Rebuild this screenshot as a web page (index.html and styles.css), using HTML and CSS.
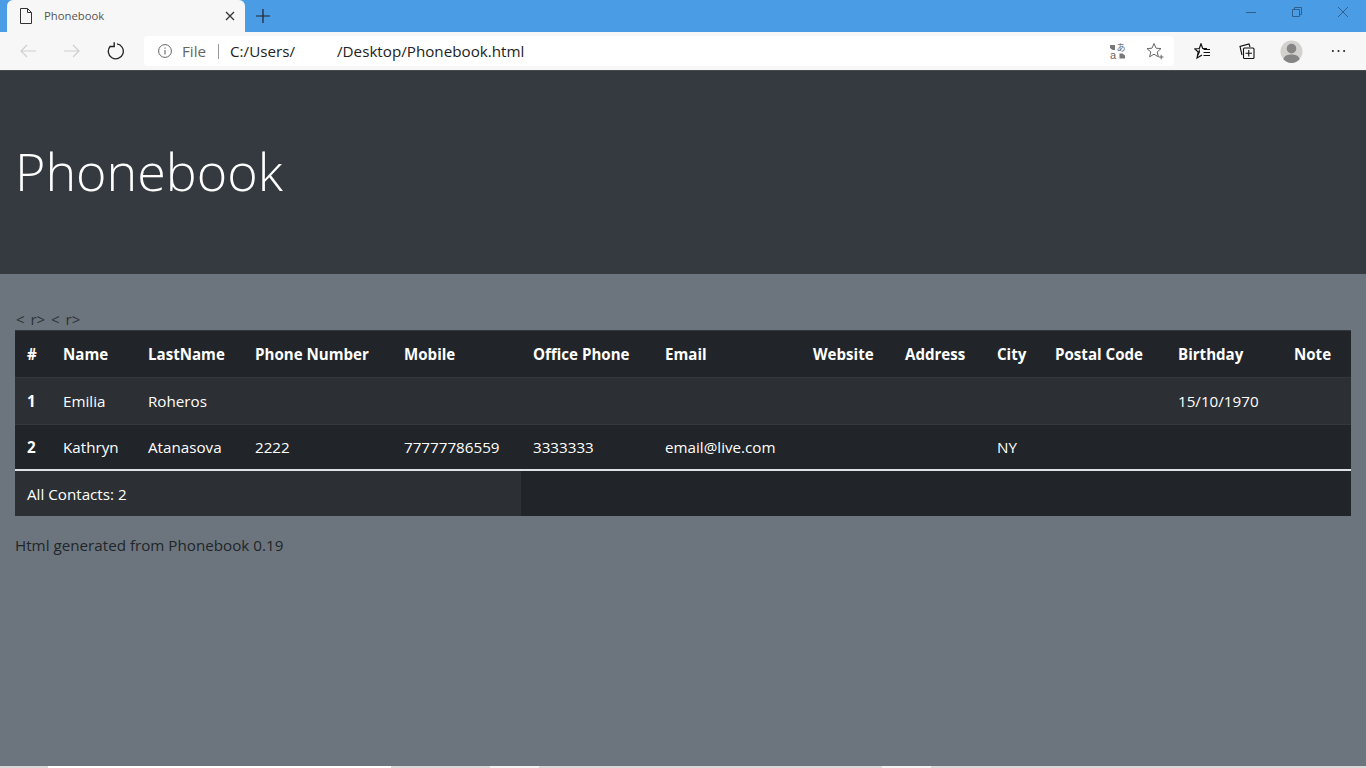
FILE: index.html
```html
<!DOCTYPE html>
<html lang="en">
<head>
<meta charset="utf-8">
<title>Phonebook</title>
<link rel="stylesheet" href="styles.css">
</head>
<body>
<div class="browser">
  <div class="tabstrip">
    <div class="tab">
      <svg class="tab-doc" width="14" height="16" viewBox="0 0 14 16"><path d="M1.500 .5h7l4 4v11h-11z M8.500 .5v4h4" fill="none" stroke="#333" stroke-width="1"/></svg>
      <span class="tab-title">Phonebook</span>
      <svg class="tab-close" width="10" height="10" viewBox="0 0 10 10"><path d="M1 1l8 8M9 1l-8 8" stroke="#333" stroke-width="1.300"/></svg>
    </div>
    <svg class="newtab" width="14" height="14" viewBox="0 0 14 14"><path d="M7 0v14M0 7h14" stroke="#222" stroke-width="1.200"/></svg>
    <div class="winctl">
      <svg width="10" height="10" viewBox="0 0 10 10"><path d="M0 5.500h10" stroke="#2f5f8a" stroke-width="1"/></svg>
      <svg width="10" height="10" viewBox="0 0 10 10"><path d="M.5 2.500h7v7h-7z M2.500 2.500v-2h7v7h-2" fill="none" stroke="#2f5f8a" stroke-width="1"/></svg>
      <svg width="10" height="10" viewBox="0 0 10 10"><path d="M0 0l10 10M10 0l-10 10" stroke="#2f5f8a" stroke-width="1"/></svg>
    </div>
  </div>
  <div class="toolbar">
    <svg class="nav nav-back" width="16" height="14" viewBox="0 0 16 14"><path d="M16 7H1M7 1L1 7l6 6" fill="none" stroke="#cfcfcf" stroke-width="1.200"/></svg>
    <svg class="nav nav-fwd" width="16" height="14" viewBox="0 0 16 14"><path d="M0 7h15M9 1l6 6-6 6" fill="none" stroke="#cfcfcf" stroke-width="1.200"/></svg>
    <svg class="nav nav-reload" width="18" height="18" viewBox="0 0 18 18"><path d="M10 1.900A7.500 7.500 0 1 1 3.300 4.200" fill="none" stroke="#222" stroke-width="1.300"/><path d="M7.200 .3V4.500H2.800" fill="none" stroke="#222" stroke-width="1.400"/></svg>
    <div class="address">
      <svg class="info" width="14" height="14" viewBox="0 0 14 14"><circle cx="7" cy="7" r="6.400" fill="none" stroke="#666" stroke-width="1"/><path d="M7 6v4.500M7 3.500v1.200" stroke="#666" stroke-width="1.100"/></svg>
      <span class="file">File</span>
      <span class="sep"></span>
      <span class="url url-a">C:/Users/</span>
      <span class="url url-b">/Desktop/Phonebook.html</span>
      <svg class="translate" width="17" height="17" viewBox="0 0 17 17"><path d="M1 2h5v5H3.500L1 5zM16 15.500h-5.500v-5h3l2.500 2z" fill="#777"/><text x="7.500" y="8" font-size="9" fill="#666" font-family="Noto Sans CJK JP, sans-serif">あ</text><text x="1" y="16" font-size="11" fill="#666" font-family="Liberation Sans, sans-serif">a</text></svg>
      <svg class="fav" width="18" height="18" viewBox="0 0 18 18"><path d="M8 1.500l2 4.700 5 .4-3.800 3.300 1.200 4.900L8 12.200l-4.400 2.600 1.200-4.900L1 6.600l5-.4z" fill="none" stroke="#666" stroke-width="1"/><path d="M13 15h4.500M15.200 12.800v4.500" stroke="#666" stroke-width="1"/></svg>
    </div>
    <svg class="tool t-favs" width="17" height="16" viewBox="0 0 17 16"><path d="M13 5.500H8.700L7 .8 5.300 5.500.8 6l3.400 3L3 15l5-3" fill="none" stroke="#111" stroke-width="1.200"/><path d="M5.500 5.500L4.200 9 3 15l3-6z" fill="#111"/><path d="M9.500 6.500h6.500M9.500 9.500h6.500M9.500 12.500h6.500" stroke="#111" stroke-width="1.100"/></svg>
    <svg class="tool t-coll" width="16" height="16" viewBox="0 0 16 16"><path d="M3 12L1 3.500 10 1l1 3" fill="none" stroke="#111" stroke-width="1.100"/><rect x="4.500" y="5" width="10.500" height="10.500" rx="1" fill="#f7f7f7" stroke="#111" stroke-width="1.100"/><path d="M9.750 7v6.500M6.500 10.250h6.500" stroke="#111" stroke-width="1.100"/></svg>
    <svg class="tool t-user" width="23" height="23" viewBox="0 0 24 24"><circle cx="12" cy="12" r="11.500" fill="#d3d1ce"/><circle cx="12" cy="9" r="5" fill="#858585"/><path d="M3.500 20c1-4 4.500-5 8.500-5s7.500 1 8.500 5a11 11 0 0 1-17 0z" fill="#858585"/></svg>
    <svg class="tool t-more" width="15" height="4" viewBox="0 0 16 4"><circle cx="2" cy="2" r="1.100" fill="#222"/><circle cx="8" cy="2" r="1.100" fill="#222"/><circle cx="14" cy="2" r="1.100" fill="#222"/></svg>
  </div>
</div>
<header class="jumbotron">
  <h1 class="display">Phonebook</h1>
</header>
<main class="content">
  <div class="stray">&lt; r&gt; &lt; r&gt;</div>
  <table class="contacts">
    <colgroup>
      <col class="c1"><col class="c2"><col class="c3"><col class="c4"><col class="c5"><col class="c6"><col class="c7"><col class="c8"><col class="c9"><col class="c10"><col class="c11"><col class="c12"><col class="c13">
    </colgroup>
    <thead>
      <tr class="r-head"><th>#</th><th>Name</th><th>LastName</th><th>Phone Number</th><th>Mobile</th><th>Office Phone</th><th>Email</th><th>Website</th><th>Address</th><th>City</th><th>Postal Code</th><th>Birthday</th><th>Note</th></tr>
    </thead>
    <tbody>
      <tr class="r-one"><th>1</th><td>Emilia</td><td>Roheros</td><td></td><td></td><td></td><td></td><td></td><td></td><td></td><td></td><td>15/10/1970</td><td></td></tr>
      <tr class="r-two"><th>2</th><td>Kathryn</td><td>Atanasova</td><td>2222</td><td>77777786559</td><td>3333333</td><td>email@live.com</td><td></td><td></td><td>NY</td><td></td><td></td><td></td></tr>
    </tbody>
    <tfoot>
      <tr class="r-foot"><td class="total" colspan="5">All Contacts: 2</td><td colspan="8"></td></tr>
    </tfoot>
  </table>
  <p class="generated">Html generated from Phonebook 0.19</p>
</main>
<div class="taskstrip">
  <span class="seg s1"></span><span class="seg s2"></span><span class="seg s3"></span><span class="seg s4"></span><span class="seg s5"></span><span class="seg s6"></span><span class="seg s7"></span>
</div>
</body>
</html>
```
FILE: styles.css
```css
* { box-sizing: border-box; }
html, body { margin: 0; height: 100%; }
body {
  height: 768px;
  overflow: hidden;
  display: flex;
  flex-direction: column;
  background: #6c757d;
  color: #212529;
  font-family: "Open Sans", "Noto Sans", sans-serif;
  font-size: 15.200px;
}
.browser { flex: none; height: 71px; background: #f7f7f7; border-bottom: 1px solid #4a4a4a; }
.tabstrip { height: 32px; background: #4a9de4; display: flex; align-items: flex-start; padding-left: 7px; }
.tab {
  width: 238px; height: 32px; background: #f7f7f7;
  border-radius: 6px 6px 0 0;
  display: flex; align-items: center; padding: 0 10px 0 12px;
}
.tab-doc { flex: none; }
.tab-title { margin: 0 0 2px 11px; font-size: 11.300px; color: #555; flex: 1; }
.newtab { margin: 9px 0 0 11px; }
.winctl { margin-left: auto; display: flex; gap: 36px; padding: 7px 18px 0 0; }
.toolbar { height: 38px; display: flex; align-items: center; }
.nav-back { margin-left: 20px; }
.nav-fwd { margin-left: 28px; }
.nav-reload { margin-left: 27px; }
.address {
  margin-left: 19px; width: 1030px; height: 30px; background: #fff; border-radius: 4px;
  display: flex; align-items: center; padding-left: 14px; font-size: 15.200px;
}
.file { margin-left: 10px; color: #666; }
.sep { width: 1px; height: 15px; background: #999; margin: 0 11px 0 12px; }
.url { color: #222; }
.url-b { margin-left: 42px; }
.translate { margin-left: auto; overflow: visible; }
.fav { margin: 0 10px 0 20px; }
.t-favs { margin-left: 20px; }
.t-coll { margin-left: 28px; }
.t-user { margin-left: 25px; }
.t-more { margin-left: 28px; }
.jumbotron { flex: none; height: 203px; background: #343a40; color: #fff; display: flex; align-items: center; padding: 0 15px 3px; }
.display { margin: 0; font-size: 52px; font-weight: 300; line-height: 1.2; }
.content { flex: 1; padding: 34px 15px 0; }
.stray { line-height: 23px; height: 22px; font-size: 15px; padding-left: 1px; word-spacing: 2px; color: #2c3238; }
.contacts { width: 1336px; table-layout: fixed; border-collapse: separate; border-spacing: 0; color: #fff; background: #212529; }
.c1 { width: 36px; } .c2 { width: 85px; } .c3 { width: 107px; } .c4 { width: 149px; } .c5 { width: 129px; }
.c6 { width: 132px; } .c7 { width: 148px; } .c8 { width: 92px; } .c9 { width: 92px; } .c10 { width: 58px; }
.c11 { width: 123px; } .c12 { width: 116px; } .c13 { width: 69px; }
.contacts th, .contacts td { padding: 0 12px; text-align: left; border-top: 1px solid #32383e; white-space: nowrap; overflow: hidden; }
.contacts thead th { font-size: 15.100px; }
.r-head { height: 47px; }
.r-one { height: 47px; background: #2c3034; }
.r-two { height: 45px; }
.r-foot { height: 47px; }
.contacts tfoot td { border-top: 2px solid #dee2e6; }
.contacts tfoot .total { background: #2c3034; }
.generated { margin: 18px 0 0; line-height: 22px; }
.taskstrip { flex: none; height: 2px; display: flex; background: #d9d9d9; }
.seg { height: 2px; }
.s1 { width: 48px; } .s2 { width: 343px; background: #fff; } .s3 { width: 99px; } .s4 { width: 49px; background: #f2f2f2; } .s5 { width: 343px; } .s6 { width: 49px; background: #f2f2f2; } .s7 { flex: 1; }
```
